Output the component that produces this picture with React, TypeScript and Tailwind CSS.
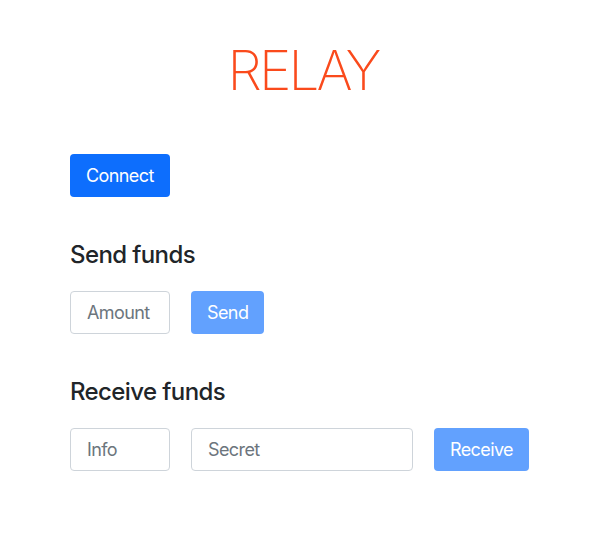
import React from 'react';

export default function App() {
  return (
    <div className="min-h-[542px] bg-white text-[#212529] font-['Inter','Liberation_Sans',sans-serif]">
      <div className="pt-[37px] text-center">
        <h1 className="font-['Inter',sans-serif] font-extralight text-[55px] leading-[66px] tracking-[-3px] text-[#fa4a1c]">RELAY</h1>
      </div>

      <div className="pl-[70px] pt-[51px]">
        <button className="h-[43px] px-4 rounded text-[18px] tracking-[-0.6px] text-white bg-[#0d6efd]">Connect</button>

        <h2 className="mt-[44px] text-[24px] leading-[28px] font-medium tracking-[-0.6px]">Send funds</h2>
        <div className="mt-[22px] flex gap-[21px]">
          <input
            placeholder="Amount"
            className="w-[100px] h-[43px] px-4 rounded border border-[#ced4da] text-[18px] tracking-[-0.6px] placeholder:text-[#6c757d] outline-none"
          />
          <button disabled className="h-[43px] px-4 rounded text-[18px] tracking-[-0.6px] text-white bg-[#62a1fe]">Send</button>
        </div>

        <h2 className="mt-[44px] text-[24px] leading-[28px] font-medium tracking-[-0.6px]">Receive funds</h2>
        <div className="mt-[22px] flex gap-[21px]">
          <input
            placeholder="Info"
            className="w-[100px] h-[43px] px-4 rounded border border-[#ced4da] text-[18px] tracking-[-0.6px] placeholder:text-[#6c757d] outline-none"
          />
          <input
            placeholder="Secret"
            className="w-[222px] h-[43px] px-4 rounded border border-[#ced4da] text-[18px] tracking-[-0.6px] placeholder:text-[#6c757d] outline-none"
          />
          <button disabled className="h-[43px] px-4 rounded text-[18px] tracking-[-0.6px] text-white bg-[#62a1fe]">Receive</button>
        </div>
      </div>
    </div>
  );
}
